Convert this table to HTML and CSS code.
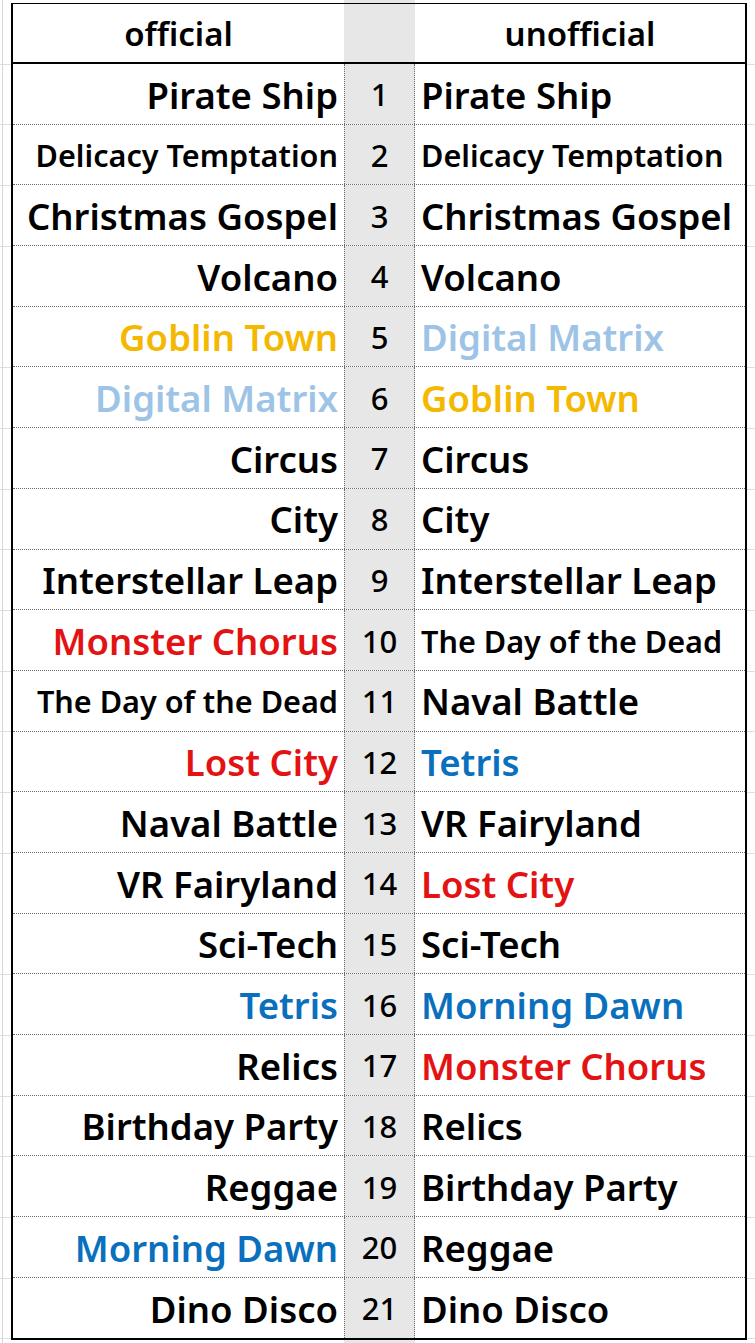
FILE: index.html
```html
<!DOCTYPE html>
<html>
<head>
<meta charset="utf-8">
<link rel="stylesheet" href="styles.css">
</head>
<body>
<div class="sheet">
  <div class="table">
    <div class="row head">
      <div class="cell left">official</div>
      <div class="cell mid"></div>
      <div class="cell right">unofficial</div>
    </div>
    <div class="row"><div class="cell left">Pirate Ship</div><div class="cell mid">1</div><div class="cell right">Pirate Ship</div></div>
    <div class="row"><div class="cell left small">Delicacy Temptation</div><div class="cell mid">2</div><div class="cell right small">Delicacy Temptation</div></div>
    <div class="row"><div class="cell left">Christmas Gospel</div><div class="cell mid">3</div><div class="cell right">Christmas Gospel</div></div>
    <div class="row"><div class="cell left">Volcano</div><div class="cell mid">4</div><div class="cell right">Volcano</div></div>
    <div class="row"><div class="cell left gold">Goblin Town</div><div class="cell mid">5</div><div class="cell right sky">Digital Matrix</div></div>
    <div class="row"><div class="cell left sky">Digital Matrix</div><div class="cell mid">6</div><div class="cell right gold">Goblin Town</div></div>
    <div class="row"><div class="cell left">Circus</div><div class="cell mid">7</div><div class="cell right">Circus</div></div>
    <div class="row"><div class="cell left">City</div><div class="cell mid">8</div><div class="cell right">City</div></div>
    <div class="row"><div class="cell left">Interstellar Leap</div><div class="cell mid">9</div><div class="cell right">Interstellar Leap</div></div>
    <div class="row"><div class="cell left red">Monster Chorus</div><div class="cell mid">10</div><div class="cell right small">The Day of the Dead</div></div>
    <div class="row"><div class="cell left small">The Day of the Dead</div><div class="cell mid">11</div><div class="cell right">Naval Battle</div></div>
    <div class="row"><div class="cell left red">Lost City</div><div class="cell mid">12</div><div class="cell right blue">Tetris</div></div>
    <div class="row"><div class="cell left">Naval Battle</div><div class="cell mid">13</div><div class="cell right">VR Fairyland</div></div>
    <div class="row"><div class="cell left">VR Fairyland</div><div class="cell mid">14</div><div class="cell right red">Lost City</div></div>
    <div class="row"><div class="cell left">Sci-Tech</div><div class="cell mid">15</div><div class="cell right">Sci-Tech</div></div>
    <div class="row"><div class="cell left blue">Tetris</div><div class="cell mid">16</div><div class="cell right blue">Morning Dawn</div></div>
    <div class="row"><div class="cell left">Relics</div><div class="cell mid">17</div><div class="cell right red">Monster Chorus</div></div>
    <div class="row"><div class="cell left">Birthday Party</div><div class="cell mid">18</div><div class="cell right">Relics</div></div>
    <div class="row"><div class="cell left">Reggae</div><div class="cell mid">19</div><div class="cell right">Birthday Party</div></div>
    <div class="row"><div class="cell left blue">Morning Dawn</div><div class="cell mid">20</div><div class="cell right">Reggae</div></div>
    <div class="row last"><div class="cell left">Dino Disco</div><div class="cell mid">21</div><div class="cell right">Dino Disco</div></div>
  </div>
</div>
</body>
</html>
```
FILE: styles.css
```css
html, body {
  margin: 0;
  padding: 0;
  background: #ffffff;
}
.sheet {
  width: 755px;
  height: 1343px;
  overflow: hidden;
  padding: 3px 0 0 11px;
  box-sizing: border-box;
  background:
    linear-gradient(#e7e7e7, #e7e7e7) 344px 0 / 71px 100% no-repeat,
    linear-gradient(#d6d6d6, #d6d6d6) 2px 0 / 1px 100% no-repeat,
    repeating-linear-gradient(to bottom, transparent 0, transparent 59.7px, #dedede 59.7px, #dedede 60.7px) 0 4px / 100% 100% no-repeat,
    #ffffff;
}
.table {
  width: 736px;
  border: 2px solid #000;
  border-top: 1px solid #000;
  box-sizing: border-box;
  background: #ffffff;
  font-family: "Noto Sans", "Noto Sans CJK JP", sans-serif;
  font-weight: 650;
  color: #000;
}
.row {
  display: grid;
  grid-template-columns: 331px 71px 330px;
  height: 60.7px;
  box-sizing: border-box;
  border-bottom: 1px dotted #6a6a6a;
}
.row.head {
  height: 60px;
  border-bottom: 2px solid #000;
}
.row.last {
  border-bottom: none;
  height: 60px;
}
.cell {
  display: flex;
  align-items: center;
  white-space: nowrap;
  font-size: 36.5px;
  line-height: 1;
  padding-top: 2px;
  box-sizing: border-box;
}
.left {
  justify-content: flex-end;
  padding-right: 6px;
}
.right {
  padding-left: 6px;
}
.mid {
  background: #e7e7e7;
  justify-content: center;
  font-weight: 500;
  font-size: 31px;
  border-left: 1px dotted #6a6a6a;
  border-right: 1px dotted #6a6a6a;
}
.head .mid {
  border-left: none;
  border-right: none;
}
.head .cell {
  justify-content: center;
  font-size: 33px;
  padding: 0;
}
.small { font-size: 30.6px; }
.gold { color: #f5b800; }
.sky { color: #9dc3e6; }
.red { color: #e31313; }
.blue { color: #0a70bd; }
```
